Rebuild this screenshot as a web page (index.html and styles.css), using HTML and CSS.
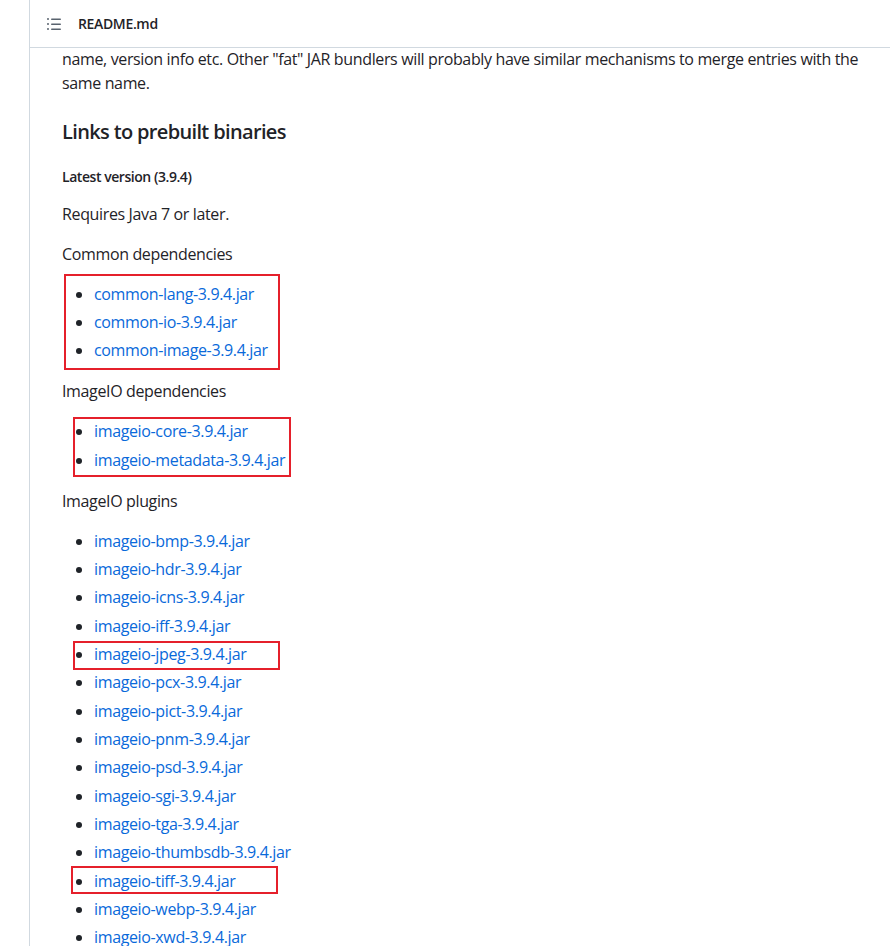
FILE: index.html
```html
<!DOCTYPE html>
<html lang="en">
<head>
<meta charset="utf-8">
<title>README.md</title>
<link rel="stylesheet" href="styles.css">
</head>
<body>
<div class="readme">
  <div class="readme-header">
    <svg class="list-icon" viewBox="0 0 16 16" width="16" height="16" aria-hidden="true"><path d="M5.75 2.5h8.5a.75.75 0 0 1 0 1.5h-8.5a.75.75 0 0 1 0-1.5Zm0 5h8.5a.75.75 0 0 1 0 1.5h-8.5a.75.75 0 0 1 0-1.5Zm0 5h8.5a.75.75 0 0 1 0 1.5h-8.5a.75.75 0 0 1 0-1.5ZM2 14a1 1 0 1 1 0-2 1 1 0 0 1 0 2Zm1-6a1 1 0 1 1-2 0 1 1 0 0 1 2 0ZM2 4a1 1 0 1 1 0-2 1 1 0 0 1 0 2Z"/></svg>
    <span class="readme-title">README.md</span>
  </div>
  <article class="markdown">
    <p class="first">name, version info etc. Other "fat" JAR bundlers will probably have similar mechanisms to merge entries with the same name.</p>
    <h3>Links to prebuilt binaries</h3>
    <h5>Latest version (3.9.4)</h5>
    <p>Requires Java 7 or later.</p>
    <p>Common dependencies</p>
    <ul>
      <li><a href="#">common-lang-3.9.4.jar</a></li>
      <li><a href="#">common-io-3.9.4.jar</a></li>
      <li><a href="#">common-image-3.9.4.jar</a></li>
    </ul>
    <p>ImageIO dependencies</p>
    <ul>
      <li><a href="#">imageio-core-3.9.4.jar</a></li>
      <li><a href="#">imageio-metadata-3.9.4.jar</a></li>
    </ul>
    <p>ImageIO plugins</p>
    <ul>
      <li><a href="#">imageio-bmp-3.9.4.jar</a></li>
      <li><a href="#">imageio-hdr-3.9.4.jar</a></li>
      <li><a href="#">imageio-icns-3.9.4.jar</a></li>
      <li><a href="#">imageio-iff-3.9.4.jar</a></li>
      <li><a href="#">imageio-jpeg-3.9.4.jar</a></li>
      <li><a href="#">imageio-pcx-3.9.4.jar</a></li>
      <li><a href="#">imageio-pict-3.9.4.jar</a></li>
      <li><a href="#">imageio-pnm-3.9.4.jar</a></li>
      <li><a href="#">imageio-psd-3.9.4.jar</a></li>
      <li><a href="#">imageio-sgi-3.9.4.jar</a></li>
      <li><a href="#">imageio-tga-3.9.4.jar</a></li>
      <li><a href="#">imageio-thumbsdb-3.9.4.jar</a></li>
      <li><a href="#">imageio-tiff-3.9.4.jar</a></li>
      <li><a href="#">imageio-webp-3.9.4.jar</a></li>
      <li><a href="#">imageio-xwd-3.9.4.jar</a></li>
    </ul>
  </article>
</div>
<div class="mark mark-1"></div>
<div class="mark mark-2"></div>
<div class="mark mark-3"></div>
<div class="mark mark-4"></div>
</body>
</html>
```
FILE: styles.css
```css
html, body {
  margin: 0;
  padding: 0;
  background: #ffffff;
}
body {
  font-family: "Open Sans", "Noto Sans", "Liberation Sans", sans-serif;
  color: #1f2328;
  font-size: 16px;
  line-height: 1.5;
  letter-spacing: -0.36px;
  height: 946px;
  overflow: hidden;
  position: relative;
}
.readme {
  margin-left: 29px;
  border-left: 1px solid #d1d9e0;
  min-height: 946px;
}
.readme-header {
  height: 47px;
  border-bottom: 1px solid #d1d9e0;
  display: flex;
  align-items: center;
  gap: 16px;
  padding-left: 16px;
}
.list-icon {
  fill: #59636e;
  flex: none;
}
.readme-title {
  font-size: 14px;
  font-weight: 600;
  letter-spacing: -0.35px;
  color: #1f2328;
}
.markdown {
  padding: 0 12px 0 32px;
}
.markdown p {
  margin: 0 0 16px;
}
.markdown p.first {
  margin-top: -1px;
}
.markdown h3 {
  font-size: 20px;
  font-weight: 600;
  line-height: 1.25;
  letter-spacing: -0.65px;
  margin: 24px 0 16px;
}
.markdown h5 {
  font-size: 14px;
  font-weight: 600;
  line-height: 1.25;
  letter-spacing: -0.45px;
  margin: 24px 0 16px;
}
.markdown ul {
  margin: 0 0 17px;
  padding-left: 32px;
}
.markdown li + li {
  margin-top: 4.35px;
}
.markdown a {
  color: #0969da;
  text-decoration: none;
}
.mark {
  position: absolute;
  border: 2px solid #e5202b;
  box-sizing: border-box;
}
.mark-1 { left: 64px; top: 274px; width: 216px; height: 96px; }
.mark-2 { left: 73px; top: 417px; width: 218px; height: 60px; }
.mark-3 { left: 73px; top: 641px; width: 207px; height: 29px; }
.mark-4 { left: 71px; top: 866px; width: 207px; height: 28px; }
```
